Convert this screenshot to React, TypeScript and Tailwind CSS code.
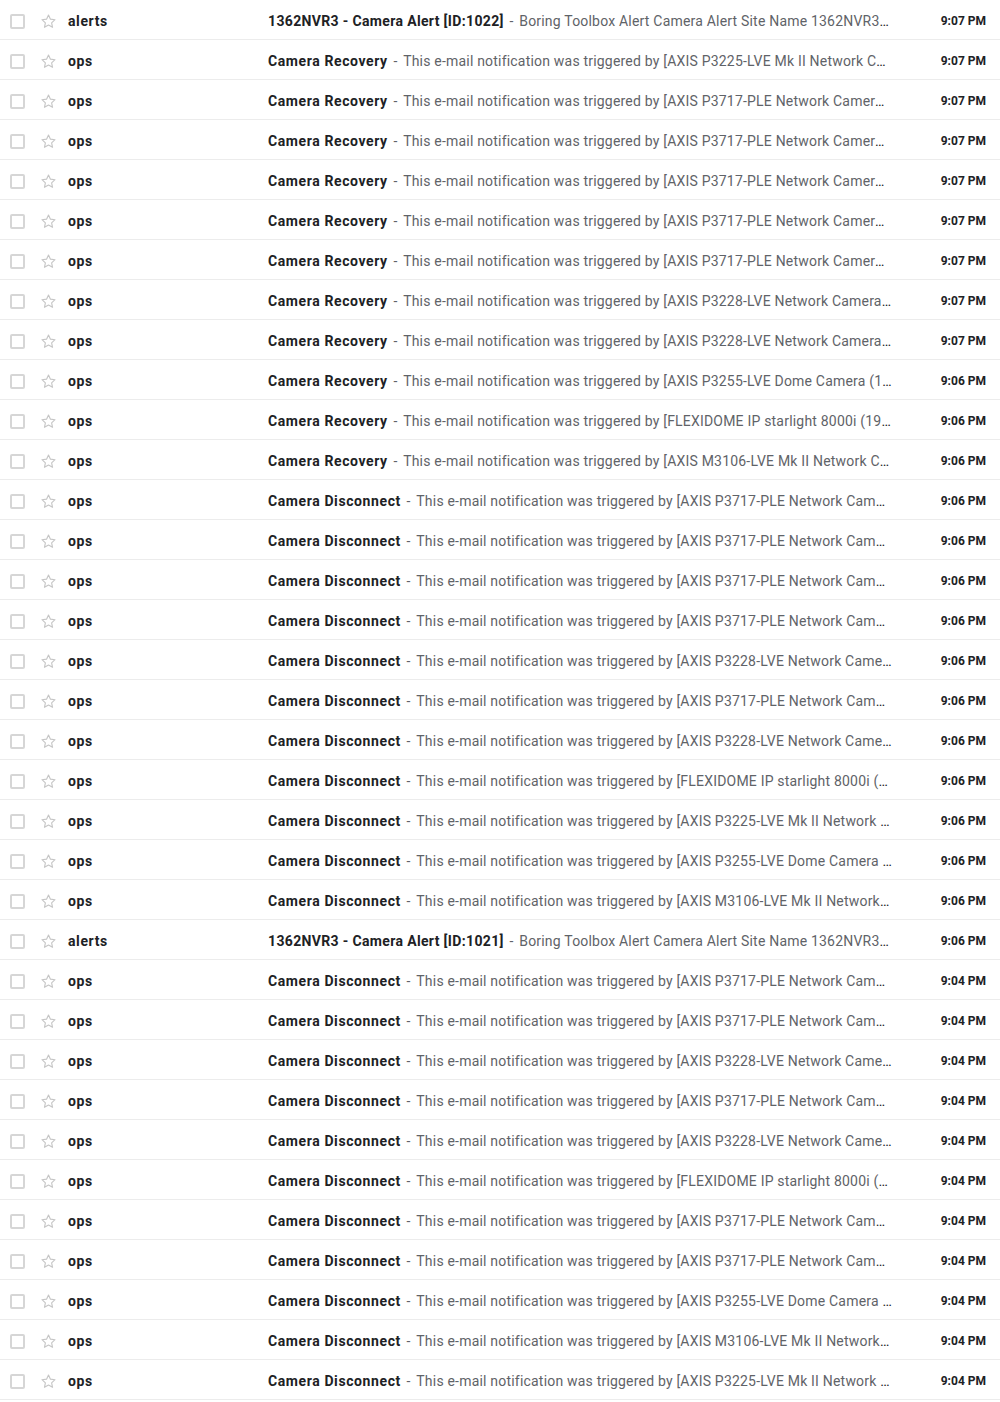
import React from "react";

interface Mail {
  sender: string;
  subject: string;
  snippet: string;
  time: string;
}

const P3717 = "AXIS P3717-PLE Network Camera (192.168.10.31)";
const P3228 = "AXIS P3228-LVE Network Camera (192.168.10.42)";
const P3255 = "AXIS P3255-LVE Dome Camera (192.168.10.18)";
const P3225 = "AXIS P3225-LVE Mk II Network Camera (192.168.10.27)";
const M3106 = "AXIS M3106-LVE Mk II Network Camera (192.168.10.11)";
const FLEX = "FLEXIDOME IP starlight 8000i (192.168.10.55)";

const trig = (cam: string) => `This e-mail notification was triggered by [${cam}]`;

const rec = (cam: string, time: string): Mail => ({
  sender: "ops",
  subject: "Camera Recovery",
  snippet: trig(cam),
  time,
});
const dis = (cam: string, time: string): Mail => ({
  sender: "ops",
  subject: "Camera Disconnect",
  snippet: trig(cam),
  time,
});
const alert = (id: string, time: string): Mail => ({
  sender: "alerts",
  subject: `1362NVR3 - Camera Alert [ID:${id}]`,
  snippet: "Boring Toolbox Alert Camera Alert Site Name 1362NVR3 NVR Name 1362NVR3",
  time,
});

const mails: Mail[] = [
  alert("1022", "9:07 PM"),
  rec(P3225, "9:07 PM"),
  rec(P3717, "9:07 PM"),
  rec(P3717, "9:07 PM"),
  rec(P3717, "9:07 PM"),
  rec(P3717, "9:07 PM"),
  rec(P3717, "9:07 PM"),
  rec(P3228, "9:07 PM"),
  rec(P3228, "9:07 PM"),
  rec(P3255, "9:06 PM"),
  rec(FLEX, "9:06 PM"),
  rec(M3106, "9:06 PM"),
  dis(P3717, "9:06 PM"),
  dis(P3717, "9:06 PM"),
  dis(P3717, "9:06 PM"),
  dis(P3717, "9:06 PM"),
  dis(P3228, "9:06 PM"),
  dis(P3717, "9:06 PM"),
  dis(P3228, "9:06 PM"),
  dis(FLEX, "9:06 PM"),
  dis(P3225, "9:06 PM"),
  dis(P3255, "9:06 PM"),
  dis(M3106, "9:06 PM"),
  alert("1021", "9:06 PM"),
  dis(P3717, "9:04 PM"),
  dis(P3717, "9:04 PM"),
  dis(P3228, "9:04 PM"),
  dis(P3717, "9:04 PM"),
  dis(P3228, "9:04 PM"),
  dis(FLEX, "9:04 PM"),
  dis(P3717, "9:04 PM"),
  dis(P3717, "9:04 PM"),
  dis(P3255, "9:04 PM"),
  dis(M3106, "9:04 PM"),
  dis(P3225, "9:04 PM"),
];

function Star() {
  return (
    <svg width="17" height="17" viewBox="0 0 24 24" fill="none">
      <path
        d="M12 2.8l2.75 5.9 6.45.75-4.8 4.4 1.3 6.35L12 17l-5.7 3.2 1.3-6.35-4.8-4.4 6.45-.75z"
        stroke="#c6c6c6"
        strokeWidth="1.6"
        strokeLinejoin="round"
      />
    </svg>
  );
}

export default function App() {
  return (
    <div className="w-full bg-white font-['Roboto',sans-serif] text-[#202124]">
      {mails.map((m, i) => (
        <div
          key={i}
          className="flex items-center h-10 border-b border-[#ececec] pt-[3px] pl-[10px] pr-[14px]"
        >
          <div className="w-[15px] h-[15px] border-2 border-[#d6d6d6] rounded-[2px] shrink-0" />
          <div className="ml-[15px] w-[17px] shrink-0 flex items-center">
            <Star />
          </div>
          <div className="ml-[11px] w-[200px] shrink-0 text-[14px] font-bold tracking-[0.6px]">
            {m.sender}
          </div>
          <div className="w-[624px] shrink-0 truncate text-[14px] tracking-[0.2px]">
            <span
              className={
                m.sender === "alerts"
                  ? "font-bold tracking-[0.35px]"
                  : "font-bold tracking-[0.6px]"
              }
            >
              {m.subject}
            </span>
            <span className="text-[#5f6368]">
              <span className="mx-[2px]"> - </span>
              {m.snippet}
            </span>
          </div>
          <div className="flex-1 text-right text-[12px] font-bold">{m.time}</div>
        </div>
      ))}
    </div>
  );
}
